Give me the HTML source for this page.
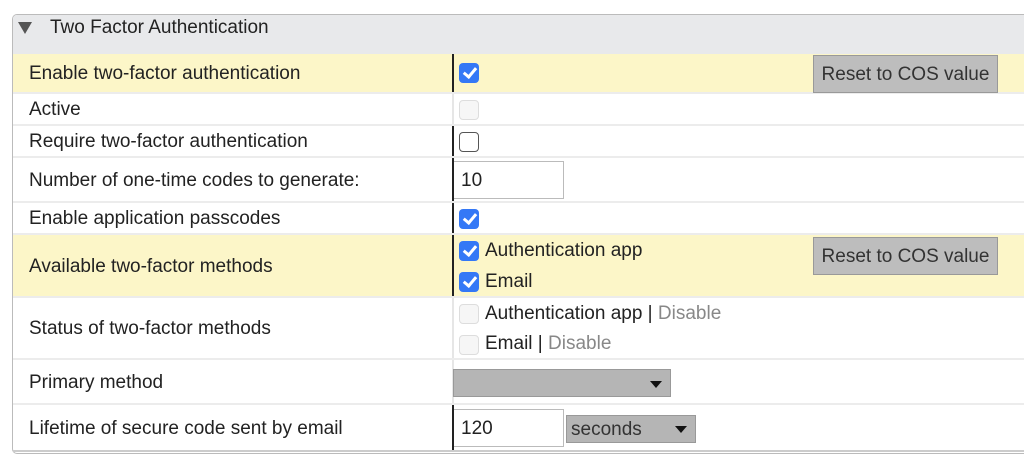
<!DOCTYPE html><html><head><style>
body{margin:0;width:1024px;height:467px;background:#fff;font-family:"Liberation Sans",sans-serif;font-size:19px;color:#222;position:relative;overflow:hidden}
.a{position:absolute}
.panel{left:12px;top:14px;width:1030px;height:438px;border:1px solid #bbb;border-radius:5px 0 0 5px}
.hdr{left:13px;top:15px;width:1020px;height:39px;background:#e8e9eb;border-radius:4px 0 0 0}
.row{position:absolute;left:13px;width:1020px;border-bottom:2px solid #ececec;box-sizing:border-box}
.lbl{position:absolute;left:16px;top:50%;transform:translateY(-46%)}
.y{background:#fcf6c8}
.div{position:absolute;left:439px;top:0;bottom:0;width:2px;background:#e6e6e6}
.div.k{background:#222}
.cb{position:absolute;width:20px;height:20px;border-radius:4px;box-sizing:border-box}
.on{background:#3478f6}
.on:after{content:"";position:absolute;left:7px;top:2px;width:5px;height:10px;border:solid #fff;border-width:0 3px 3px 0;transform:rotate(40deg)}
.off{border:1.5px solid #555;background:#fff}
.dis{border:1px solid #ddd;background:#f6f6f6}
.btn{position:absolute;left:800px;width:185px;height:38px;background:#bdbdbd;border:1px solid #999;box-sizing:border-box;text-align:center;line-height:37px;color:#333}
.inp{position:absolute;left:441px;width:110px;height:38px;border:1px solid #bbb;border-left:none;box-sizing:border-box;background:#fff;padding-left:7px;line-height:38px}
.sel{position:absolute;background:#b5b5b5;border:1px solid #999;box-sizing:border-box}
.tri{position:absolute;width:0;height:0;border-left:6px solid transparent;border-right:6px solid transparent;border-top:7px solid #111}
.g{color:#888}
</style></head><body>
<div class="a panel"></div>
<div class="a hdr"></div>
<div class="a" style="left:18px;top:22px;width:0;height:0;border-left:7px solid transparent;border-right:7px solid transparent;border-top:12px solid #555"></div>
<div class="a" style="left:50px;top:17px">Two Factor Authentication</div>

<div class="row y" style="top:54px;height:40px"><span class="lbl">Enable two-factor authentication</span><div class="div k"></div><div class="cb on" style="left:446px;top:9px"></div><div class="btn" style="top:1px">Reset to COS value</div></div>
<div class="row" style="top:94px;height:32px"><span class="lbl">Active</span><div class="div"></div><div class="cb dis" style="left:446px;top:6px"></div></div>
<div class="row" style="top:126px;height:32px"><span class="lbl">Require two-factor authentication</span><div class="div k"></div><div class="cb off" style="left:446px;top:6px"></div></div>
<div class="row" style="top:158px;height:45px"><span class="lbl">Number of one-time codes to generate:</span><div class="div k"></div><div class="inp" style="top:3px">10</div></div>
<div class="row" style="top:203px;height:32px"><span class="lbl">Enable application passcodes</span><div class="div k"></div><div class="cb on" style="left:446px;top:6px"></div></div>
<div class="row y" style="top:235px;height:63px"><span class="lbl">Available two-factor methods</span><div class="div k"></div>
<div class="cb on" style="left:446px;top:6px"></div><span class="a" style="left:472px;top:5px">Authentication app</span>
<div class="cb on" style="left:446px;top:37px"></div><span class="a" style="left:472px;top:36px">Email</span>
<div class="btn" style="top:2px">Reset to COS value</div></div>
<div class="row" style="top:298px;height:62px"><span class="lbl">Status of two-factor methods</span><div class="div"></div>
<div class="cb dis" style="left:446px;top:6px"></div><span class="a" style="left:472px;top:5px">Authentication app | <span class="g">Disable</span></span>
<div class="cb dis" style="left:446px;top:37px"></div><span class="a" style="left:472px;top:35px">Email | <span class="g">Disable</span></span></div>
<div class="row" style="top:360px;height:45px"><span class="lbl">Primary method</span><div class="div"></div>
<div class="sel" style="left:440px;top:9px;width:218px;height:28px"><div class="tri" style="left:196px;top:11px"></div></div></div>
<div class="row" style="top:405px;height:47px;border-bottom:2px solid #ccc"><span class="lbl">Lifetime of secure code sent by email</span><div class="div k"></div>
<div class="inp" style="top:4px;height:38px">120</div>
<div class="sel" style="left:553px;top:10px;width:130px;height:28px;line-height:27px;padding-left:4px;color:#333">seconds<div class="tri" style="left:108px;top:10px"></div></div></div>
</body></html>
